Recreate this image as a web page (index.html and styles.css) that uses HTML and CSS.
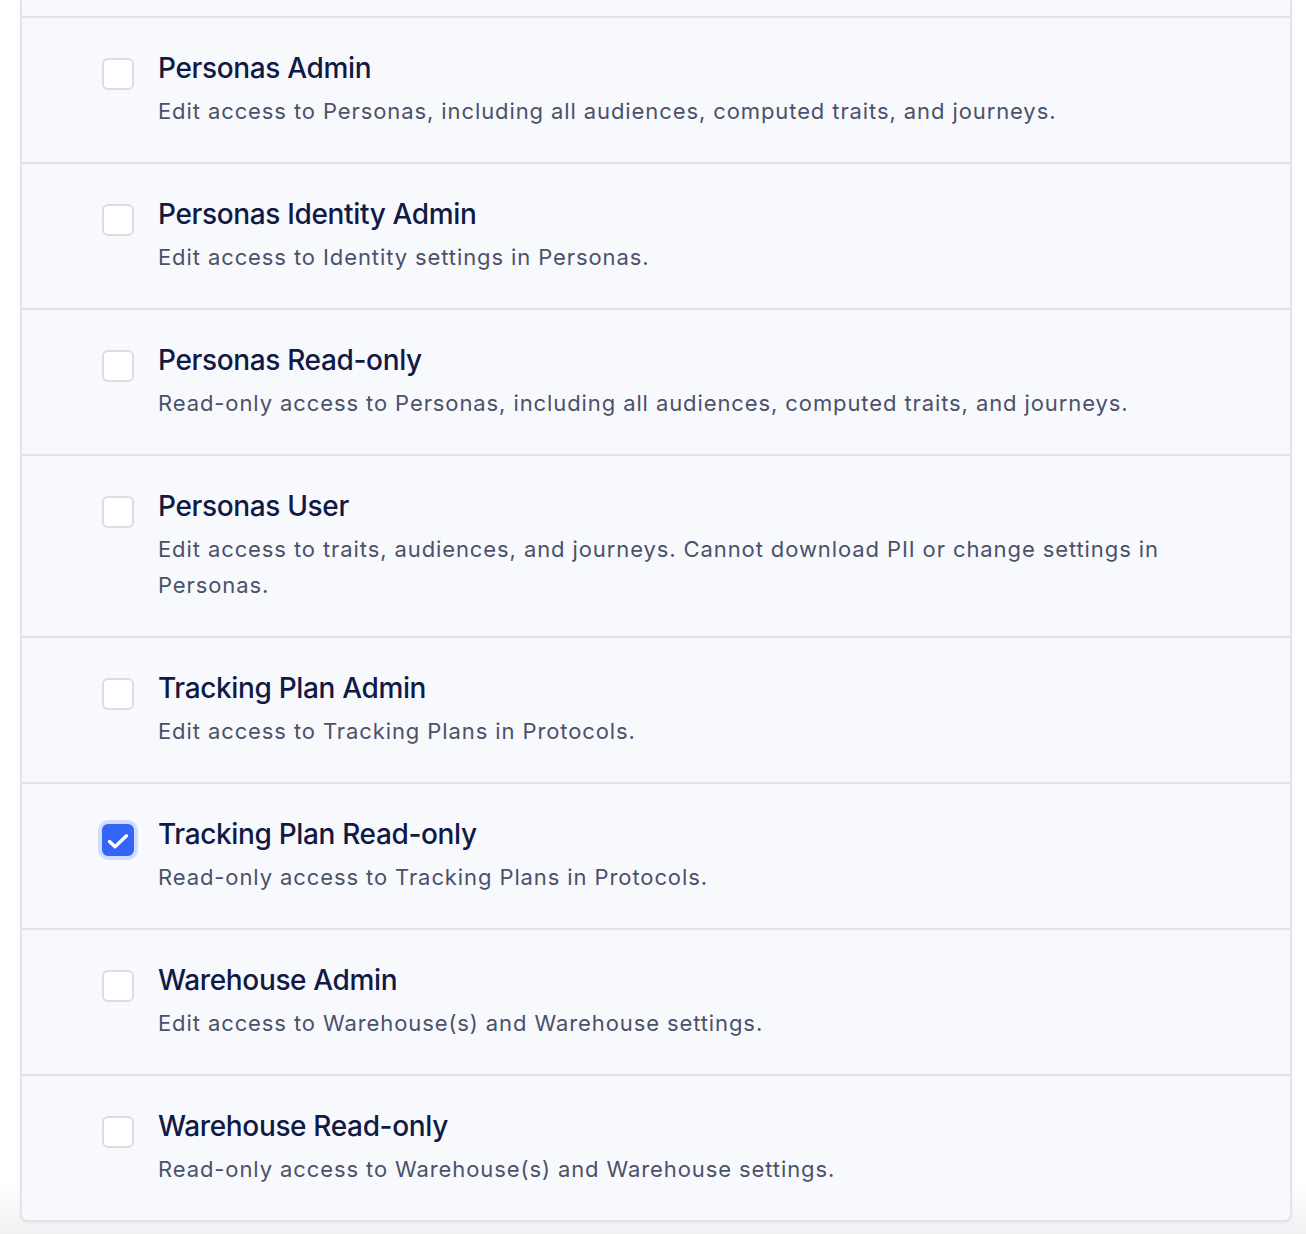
FILE: index.html
```html
<!DOCTYPE html>
<html lang="en">
<head>
<meta charset="utf-8">
<title>Roles</title>
<link rel="stylesheet" href="styles.css">
</head>
<body>
<div class="panel">
  <div class="row row-stub"></div>
  <label class="row">
    <span class="box"></span>
    <span class="text">
      <span class="title">Personas Admin</span>
      <span class="desc">Edit access to Personas, including all audiences, computed traits, and journeys.</span>
    </span>
  </label>
  <label class="row">
    <span class="box"></span>
    <span class="text">
      <span class="title">Personas Identity Admin</span>
      <span class="desc">Edit access to Identity settings in Personas.</span>
    </span>
  </label>
  <label class="row">
    <span class="box"></span>
    <span class="text">
      <span class="title">Personas Read-only</span>
      <span class="desc">Read-only access to Personas, including all audiences, computed traits, and journeys.</span>
    </span>
  </label>
  <label class="row">
    <span class="box"></span>
    <span class="text">
      <span class="title">Personas User</span>
      <span class="desc">Edit access to traits, audiences, and journeys. Cannot download PII or change settings in Personas.</span>
    </span>
  </label>
  <label class="row">
    <span class="box"></span>
    <span class="text">
      <span class="title">Tracking Plan Admin</span>
      <span class="desc">Edit access to Tracking Plans in Protocols.</span>
    </span>
  </label>
  <label class="row">
    <span class="box box-checked">
      <svg class="check" viewBox="0 0 22 22" width="22" height="22" aria-hidden="true"><path d="M2.5 11.5l5.6 5.2L19.5 5.8" fill="none" stroke="#fff" stroke-width="3.4" stroke-linecap="round" stroke-linejoin="round"/></svg>
    </span>
    <span class="text">
      <span class="title">Tracking Plan Read-only</span>
      <span class="desc">Read-only access to Tracking Plans in Protocols.</span>
    </span>
  </label>
  <label class="row">
    <span class="box"></span>
    <span class="text">
      <span class="title">Warehouse Admin</span>
      <span class="desc">Edit access to Warehouse(s) and Warehouse settings.</span>
    </span>
  </label>
  <label class="row row-last">
    <span class="box"></span>
    <span class="text">
      <span class="title">Warehouse Read-only</span>
      <span class="desc">Read-only access to Warehouse(s) and Warehouse settings.</span>
    </span>
  </label>
</div>
</body>
</html>
```
FILE: styles.css
```css
html {
  background: linear-gradient(to bottom, #ffffff 0, #ffffff 1180px, #f1f1f3 1234px);
  min-height: 100%;
}
body {
  margin: 0;
  padding: 0 14px 12px 20px;
  font-family: Inter, "Noto Sans", "Liberation Sans", sans-serif;
  -webkit-font-smoothing: antialiased;
}
.panel {
  background: #f8f9fd;
  border: 2px solid #e3e4eb;
  border-top: none;
  border-radius: 0 0 8px 8px;
  box-shadow: 0 1px 3px rgba(20, 30, 60, 0.06);
  display: flex;
  flex-direction: column;
}
.row {
  display: flex;
  align-items: flex-start;
  gap: 24px;
  padding: 30px 80px 33px 80px;
  border-bottom: 2px solid #e3e4eb;
  cursor: pointer;
}
.row-stub {
  height: 16px;
  padding: 0;
}
.row-last {
  border-bottom: none;
}
.box {
  flex: none;
  width: 32px;
  height: 32px;
  box-sizing: border-box;
  margin-top: 10px;
  border: 2px solid #dcdde3;
  border-radius: 6px;
  background: #ffffff;
  display: flex;
  align-items: center;
  justify-content: center;
}
.box-checked {
  background: #3366f6;
  border-color: #3366f6;
  box-shadow: 0 0 0 4px #d3ddfb;
}
.check {
  flex: none;
  margin-top: 2px;
}
.text {
  display: flex;
  flex-direction: column;
}
.title {
  font-size: 28px;
  line-height: 40px;
  font-weight: 500;
  color: #101a45;
  letter-spacing: -0.35px;
  margin-bottom: 5px;
}
.desc {
  font-size: 22px;
  line-height: 36px;
  color: #4b516a;
  letter-spacing: 0.9px;
}
```
